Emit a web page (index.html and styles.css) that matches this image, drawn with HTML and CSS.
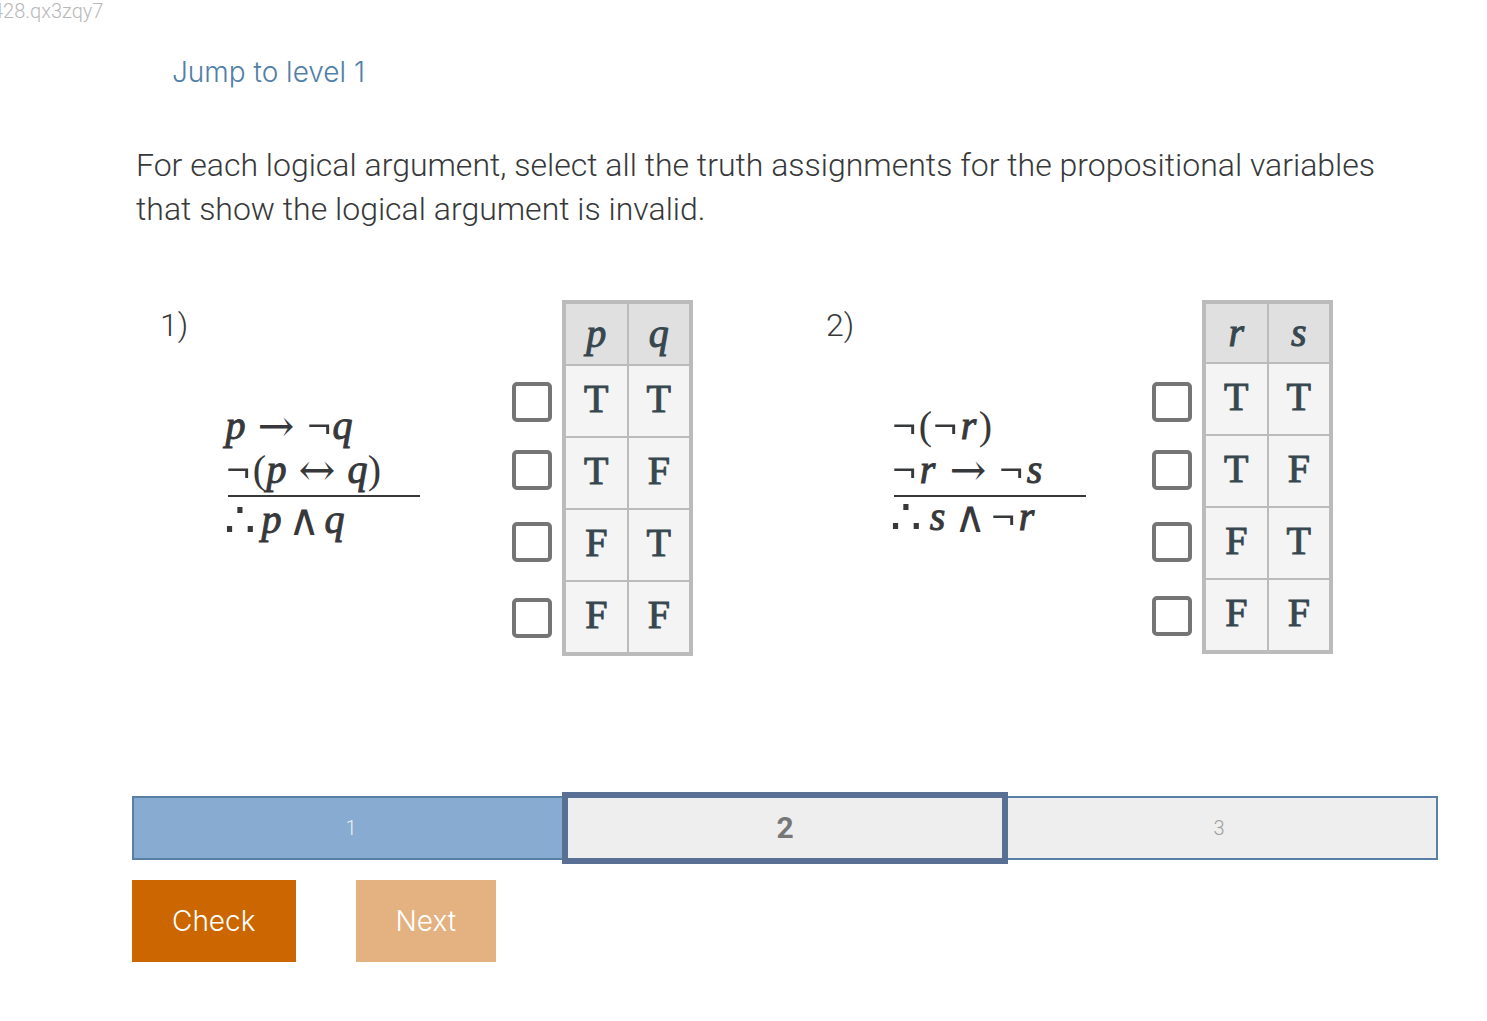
FILE: index.html
```html
<!DOCTYPE html>
<html lang="en">
<head>
  <meta charset="UTF-8">
  <meta name="viewport" content="width=device-width, initial-scale=1.0">
  <title>Invalid arguments</title>
  <link rel="stylesheet" href="styles.css">
</head>
<body>
  <div class="activity-id">428.qx3zqy7</div>
  <main class="activity">
    <a class="jump-link" href="#level-1">Jump to level 1</a>
    <p class="prompt">For each logical argument, select all the truth assignments for the propositional variables that show the logical argument is invalid.</p>

    <div class="problems">
      <section class="problem first">
        <div class="number">1)</div>
        <div class="argument">
          <div class="line"><i>p</i><span class="rel">→</span><span class="op">¬</span><i>q</i></div>
          <div class="line"><span class="op">¬</span><b>(</b><i>p</i><span class="rel">↔</span><i>q</i><b>)</b></div>
          <div class="line conclusion"><span class="op so">∴</span><i>p</i><span class="op and">∧</span><i>q</i></div>
        </div>
        <div class="checks">
          <input type="checkbox" aria-label="p true, q true">
          <input type="checkbox" aria-label="p true, q false">
          <input type="checkbox" aria-label="p false, q true">
          <input type="checkbox" aria-label="p false, q false">
        </div>
        <table class="truth">
          <tr><th>p</th><th>q</th></tr>
          <tr><td>T</td><td>T</td></tr>
          <tr><td>T</td><td>F</td></tr>
          <tr><td>F</td><td>T</td></tr>
          <tr><td>F</td><td>F</td></tr>
        </table>
      </section>

      <section class="problem second">
        <div class="number">2)</div>
        <div class="argument">
          <div class="line"><span class="op">¬</span><b>(</b><span class="op">¬</span><i>r</i><b>)</b></div>
          <div class="line"><span class="op">¬</span><i>r</i><span class="rel">→</span><span class="op">¬</span><i>s</i></div>
          <div class="line conclusion"><span class="op so">∴</span><i>s</i><span class="op and">∧</span><span class="op">¬</span><i>r</i></div>
        </div>
        <div class="checks">
          <input type="checkbox" aria-label="r true, s true">
          <input type="checkbox" aria-label="r true, s false">
          <input type="checkbox" aria-label="r false, s true">
          <input type="checkbox" aria-label="r false, s false">
        </div>
        <table class="truth">
          <tr><th>r</th><th>s</th></tr>
          <tr><td>T</td><td>T</td></tr>
          <tr><td>T</td><td>F</td></tr>
          <tr><td>F</td><td>T</td></tr>
          <tr><td>F</td><td>F</td></tr>
        </table>
      </section>
    </div>

    <div class="levels">
      <div class="level done">1</div>
      <div class="level current">2</div>
      <div class="level">3</div>
    </div>

    <div class="buttons">
      <button type="button" class="button">Check</button>
      <button type="button" class="button" disabled>Next</button>
    </div>
  </main>
</body>
</html>
```
FILE: styles.css
```css
* {
  box-sizing: border-box;
}
body {
  margin: 0;
  background: white;
  color: #37383a;
  font-family: Roboto, "Liberation Sans", sans-serif;
  font-weight: 300;
  overflow-x: hidden;
}
.activity-id {
  position: absolute;
  top: 0;
  left: -8px;
  font-size: 20px;
  line-height: 22px;
  color: #b8b8b8;
}
.activity {
  padding: 52px 49px 40px 132px;
}
.jump-link {
  display: inline-block;
  margin-left: 40px;
  font-family: Inter, "Liberation Sans", sans-serif;
  font-size: 28px;
  line-height: 40px;
  color: #527fa8;
  text-decoration: none;
}
.prompt {
  margin: 51px 40px 0 4px;
  font-size: 32px;
  line-height: 44px;
}
.problems {
  display: flex;
  gap: 133px;
  margin: 69px 0 0 28px;
}
.problem {
  display: flex;
  align-items: flex-start;
}
.number {
  width: 68px;
  padding-top: 3px;
  font-size: 32px;
  line-height: 44px;
}

/* logic arguments */
.argument {
  width: 192px;
  margin-top: 104px;
  font-family: "Liberation Serif", serif;
  font-size: 40px;
  font-weight: 400;
  white-space: nowrap;
}
.line {
  display: flex;
  height: 44px;
  line-height: 44px;
  text-indent: -4px;
}
.line i,
.line b,
.op,
.rel {
  width: 19px;
  text-align: center;
}
.line i {
  -webkit-text-stroke: 1px;
}
.line b {
  width: 15px;
  font-weight: 400;
}
.op {
  width: 26px;
  font-family: Roboto, "DejaVu Sans", sans-serif;
  font-size: 50px;
  font-weight: 300;
}
.rel {
  width: 40px;
  margin: 0 11px;
  font-family: "DejaVu Serif", serif;
  font-size: 44px;
}
.op.and {
  margin: 0 9px;
  font-family: "DejaVu Sans", sans-serif;
  font-size: 44px;
  font-weight: 200;
}
.op.so {
  margin-right: 10px;
  font-family: "DejaVu Serif", serif;
  font-size: 50px;
}
.conclusion {
  height: 51px;
  margin-top: 3px;
  border-top: 2px solid #37383a;
  line-height: 46px;
}
.second .conclusion {
  line-height: 40px;
}

/* answers */
.checks {
  display: flex;
  flex-direction: column;
  padding-top: 82px;
  margin: 0 10px 0 92px;
}
.second .checks {
  margin-left: 66px;
}
.checks input {
  appearance: none;
  width: 40px;
  height: 40px;
  margin: 0 0 28px;
  border: 4px solid #757575;
  border-radius: 5px;
  background: white;
}
.checks input:nth-child(2) {
  margin-bottom: 32px;
}
.checks input:nth-child(3) {
  margin-bottom: 36px;
}
.second .checks input:nth-child(3) {
  margin-bottom: 34px;
}
.checks input:last-child {
  margin-bottom: 0;
}
.checks input:checked {
  background: #527fa8;
}
.truth {
  width: 131px;
  border: 2px solid #bbb;
  border-spacing: 2px;
  background: #bbb;
  color: #37474f;
  font-family: "Liberation Serif", serif;
  font-size: 40px;
  line-height: 44px;
  text-align: center;
  -webkit-text-stroke: 1px;
}
.truth th,
.truth td {
  width: 60px;
  height: 70px;
  padding: 0 0 4px;
  background: #f4f4f4;
  font-weight: 400;
}
.truth th {
  height: 60px;
  padding: 0;
  background: #e0e0e0;
  font-style: italic;
}
.second .truth th {
  height: 58px;
}

/* progress */
.levels {
  display: flex;
  margin-top: 140px;
  border: 2px solid #587fa6;
}
.level {
  flex: 1;
  background: #eee;
  color: #a0a0a0;
  font-size: 20px;
  line-height: 60px;
  text-align: center;
}
.level.done {
  background: #87abd1;
  color: #eee;
}
.level.current {
  z-index: 1;
  outline: 6px solid #5a6f94;
  color: #777;
  font-size: 30px;
  font-weight: 700;
}
.buttons {
  display: flex;
  gap: 60px;
  margin-top: 20px;
}
.button {
  padding: 20px 40px;
  border: 0;
  background: #cc6600;
  color: white;
  font-family: Inter, "Liberation Sans", sans-serif;
  font-size: 28px;
  font-weight: 300;
  line-height: 42px;
  cursor: pointer;
}
.button:disabled {
  background: #e4b180;
  cursor: default;
}
```
